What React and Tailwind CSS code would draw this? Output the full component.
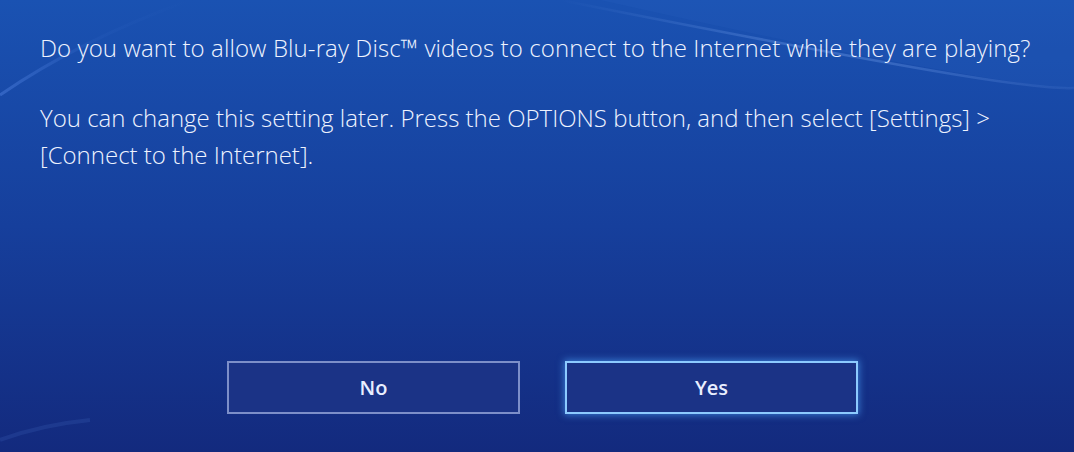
export default function App() {
  return (
    <div
      className="relative w-[1074px] h-[452px] overflow-hidden bg-gradient-to-b from-[#1a52b2] via-[#163f9c] to-[#132a7e]"
      style={{ fontFamily: '"Open Sans", "Noto Sans", sans-serif' }}
    >
      <svg className="absolute inset-0" width="1074" height="452" viewBox="0 0 1074 452">
        <defs>
          <linearGradient id="g1" x1="0" y1="0" x2="1" y2="0">
            <stop offset="0" stopColor="#6fa0ff" stopOpacity="0.3" />
            <stop offset="0.5" stopColor="#6fa0ff" stopOpacity="0.05" />
            <stop offset="1" stopColor="#6fa0ff" stopOpacity="0" />
          </linearGradient>
          <linearGradient id="g2" x1="0" y1="0" x2="1" y2="0">
            <stop offset="0" stopColor="#8fb8ff" stopOpacity="0" />
            <stop offset="0.5" stopColor="#8fb8ff" stopOpacity="0.3" />
            <stop offset="1" stopColor="#8fb8ff" stopOpacity="0.1" />
          </linearGradient>
        </defs>
        <path d="M0 95 Q 80 40 190 0" stroke="url(#g1)" strokeWidth="3" fill="none" />
        <path d="M560 0 Q 760 40 900 65 T 1074 88" stroke="url(#g2)" strokeWidth="2.5" fill="none" />
        <path d="M600 0 Q 800 45 930 68 T 1074 88 L1074 0 Z" fill="#2a62c4" opacity="0.18" />
        <path d="M0 440 Q 40 425 90 420" stroke="#5a86e0" strokeOpacity="0.15" strokeWidth="4" fill="none" />
      </svg>
      <div className="relative flex flex-col h-full">
        <div className="pl-[40px] pr-[10px] pt-[29px] text-[24px] font-light text-[#eef3ff] leading-[37px] tracking-[0.1px]">
          <p>Do you want to allow Blu-ray Disc™ videos to connect to the Internet while they are playing?</p>
          <p className="mt-[33px] tracking-normal">
            You can change this setting later. Press the OPTIONS button, and then select [Settings] &gt;
            <br />
            [Connect to the Internet].
          </p>
        </div>
        <div className="flex justify-center gap-[45px] mt-auto mb-[38px] pl-[11px]">
          <div className="w-[293px] h-[53px] border-2 border-[#7d8fc9] bg-[#1b3386] flex items-center justify-center text-[20px] font-semibold text-[#e8eeff]">
            No
          </div>
          <div className="w-[293px] h-[53px] border-2 border-[#8ccaff] bg-[#1b3386] flex items-center justify-center text-[20px] font-semibold text-[#e8eeff] shadow-[0_0_7px_1px_rgba(80,170,255,0.6)]">
            Yes
          </div>
        </div>
      </div>
    </div>
  );
}
